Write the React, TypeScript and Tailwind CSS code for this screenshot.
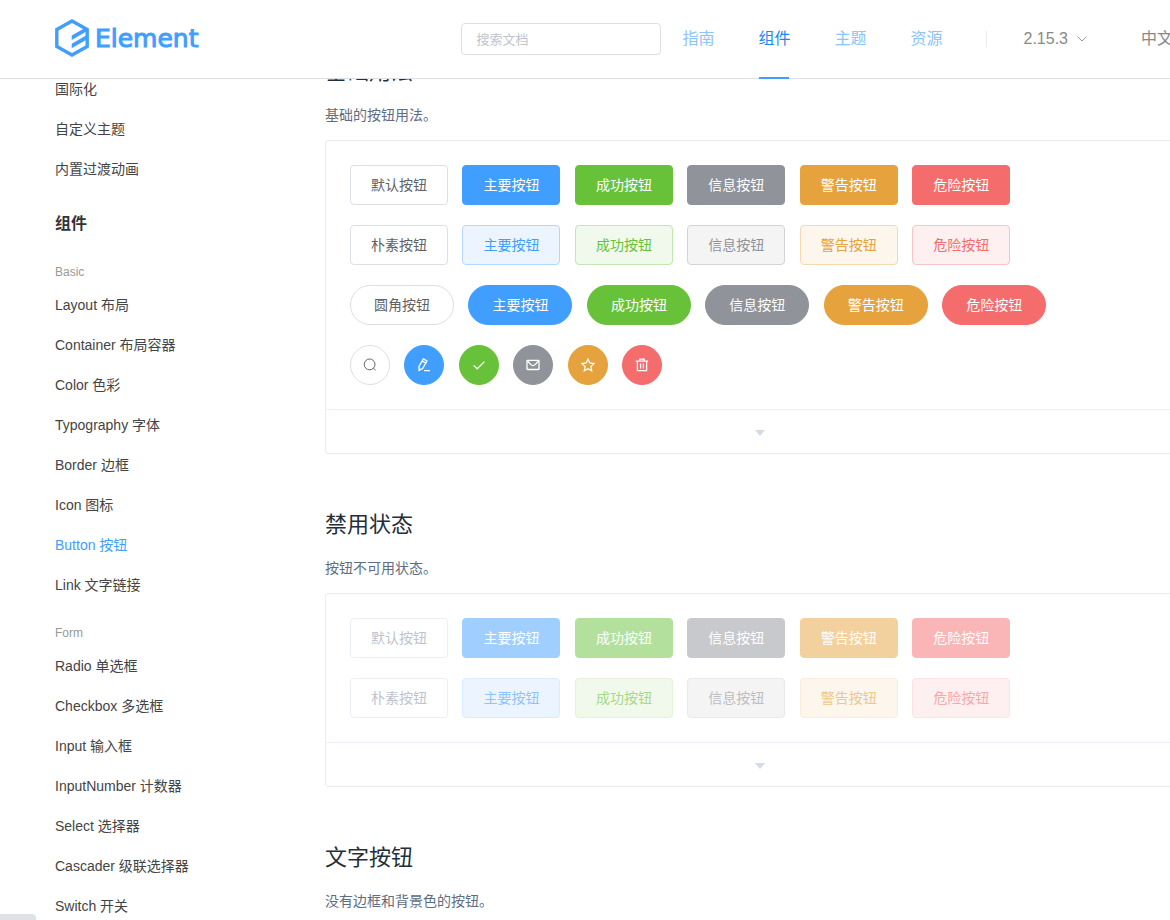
import React, { useState } from "react";

const navLinks = ["指南", "组件", "主题", "资源"];

const guides = ["国际化", "自定义主题", "内置过渡动画"];

const groups = [
  {
    name: "Basic",
    items: [
      "Layout 布局",
      "Container 布局容器",
      "Color 色彩",
      "Typography 字体",
      "Border 边框",
      "Icon 图标",
      "Button 按钮",
      "Link 文字链接",
    ],
  },
  {
    name: "Form",
    items: [
      "Radio 单选框",
      "Checkbox 多选框",
      "Input 输入框",
      "InputNumber 计数器",
      "Select 选择器",
      "Cascader 级联选择器",
      "Switch 开关",
    ],
  },
];

type Kind = "default" | "primary" | "success" | "info" | "warning" | "danger";

const kinds: Kind[] = ["default", "primary", "success", "info", "warning", "danger"];

const labels: Record<Kind, string> = {
  default: "默认按钮",
  primary: "主要按钮",
  success: "成功按钮",
  info: "信息按钮",
  warning: "警告按钮",
  danger: "危险按钮",
};

const solid: Record<Kind, string> = {
  default:
    "bg-white border-[#dcdfe6] text-[#606266] disabled:border-[#ebeef5] disabled:text-[#c0c4cc]",
  primary: "bg-[#409eff] border-[#409eff] text-white disabled:bg-[#a0cfff] disabled:border-[#a0cfff]",
  success: "bg-[#67c23a] border-[#67c23a] text-white disabled:bg-[#b3e19d] disabled:border-[#b3e19d]",
  info: "bg-[#909399] border-[#909399] text-white disabled:bg-[#c8c9cc] disabled:border-[#c8c9cc]",
  warning: "bg-[#e6a23c] border-[#e6a23c] text-white disabled:bg-[#f3d19e] disabled:border-[#f3d19e]",
  danger: "bg-[#f56c6c] border-[#f56c6c] text-white disabled:bg-[#fab6b6] disabled:border-[#fab6b6]",
};

const plain: Record<Kind, string> = {
  default:
    "bg-white border-[#dcdfe6] text-[#606266] disabled:border-[#ebeef5] disabled:text-[#c0c4cc]",
  primary: "bg-[#ecf5ff] border-[#b3d8ff] text-[#409eff] disabled:border-[#d9ecff] disabled:text-[#8cc5ff]",
  success: "bg-[#f0f9eb] border-[#c2e7b0] text-[#67c23a] disabled:border-[#e1f3d8] disabled:text-[#a4da89]",
  info: "bg-[#f4f4f5] border-[#d3d4d6] text-[#909399] disabled:border-[#e9e9eb] disabled:text-[#bcbec2]",
  warning: "bg-[#fdf6ec] border-[#f5dab1] text-[#e6a23c] disabled:border-[#faecd8] disabled:text-[#f0c78a]",
  danger: "bg-[#fef0f0] border-[#fbc4c4] text-[#f56c6c] disabled:border-[#fde2e2] disabled:text-[#f9a7a7]",
};

const icons: Record<Kind, { title: string; art: React.ReactNode }> = {
  default: {
    title: "搜索",
    art: (
      <>
        <circle cx="6.6" cy="6.4" r="5.4" strokeWidth="1" />
        <path d="M10.4 10.2 12.6 12.4" strokeWidth="1" />
      </>
    ),
  },
  primary: {
    title: "编辑",
    art: <path d="M6.4 0.9 10 3 5.6 10.6 2 12.4 2 8.5ZM5.2 3 8.8 5.1M2.2 10.8 3.6 11.6M7 12.6H13" />,
  },
  success: { title: "确认", art: <path d="M1.6 7.4 5.2 10.8 12.4 3.6" /> },
  info: {
    title: "邮件",
    art: (
      <>
        <rect x="1" y="2.3" width="12" height="9.2" rx="0.5" />
        <path d="M1.6 3 4.6 6.4Q7 8.8 9.4 6.4L12.4 3" />
      </>
    ),
  },
  warning: {
    title: "收藏",
    art: <path d="M7 1.2 8.8 5 13 5.6 9.9 8.5 10.7 12.7 7 10.7 3.3 12.7 4.1 8.5 1 5.6 5.2 5Z" />,
  },
  danger: {
    title: "删除",
    art: <path d="M0.8 3.2H13.2M4.8 3V1.1H9.2V3M2.4 3.4V12.6H11.6V3.4M5.6 5.6V10.4M8.4 5.6V10.4" />,
  },
};

function Row({ children }: { children: React.ReactNode }) {
  return <div className="h-10 whitespace-nowrap text-base">{children}</div>;
}

function ButtonRow({
  first = "默认按钮",
  styles = solid,
  shape = "rounded px-5",
  disabled = false,
}: {
  first?: string;
  styles?: Record<Kind, string>;
  shape?: string;
  disabled?: boolean;
}) {
  return (
    <Row>
      {kinds.map((kind) => (
        <React.Fragment key={kind}>
          <button
            type="button"
            disabled={disabled}
            className={`mr-2.5 inline-block h-10 border align-top text-sm ${shape} ${styles[kind]}`}
          >
            {kind === "default" ? first : labels[kind]}
          </button>{" "}
        </React.Fragment>
      ))}
    </Row>
  );
}

function IconRow() {
  return (
    <Row>
      {kinds.map((kind) => (
        <React.Fragment key={kind}>
          <button
            type="button"
            aria-label={icons[kind].title}
            className={`mr-2.5 inline-block size-10 rounded-full border align-top ${solid[kind]}`}
          >
            <svg viewBox="0 0 14 14" className="mx-auto size-3.5 fill-none stroke-current" strokeWidth="1.3">
              {icons[kind].art}
            </svg>
          </button>{" "}
        </React.Fragment>
      ))}
    </Row>
  );
}

function Demo({ title, text, children }: { title: string; text: string; children?: React.ReactNode }) {
  return (
    <section className="mb-[55px]">
      <h3 className="text-[22px] leading-8 text-[#1f2f3d]">{title}</h3>
      <p className="mt-4 mb-3.5 text-sm leading-[22px] text-[#5e6d82]">{text}</p>
      {children && (
        <div className="rounded-[3px] border border-[#ebebeb]">
          <div className="space-y-5 p-6">{children}</div>
          <button
            type="button"
            aria-label="显示代码"
            className="flex h-11 w-full items-center justify-center border-t border-[#eaeefb] pt-0.5"
          >
            <svg viewBox="0 0 10 6" className="h-1.5 w-2.5 fill-[#d3dce6]">
              <path d="M0 0H10L5 6Z" />
            </svg>
          </button>
        </div>
      )}
    </section>
  );
}

function Chevron() {
  return (
    <svg viewBox="0 0 10 6" className="h-1.5 w-2.5 fill-none stroke-[#999]" strokeWidth="1">
      <path d="M0.5 0.5 5 5 9.5 0.5" />
    </svg>
  );
}

function Logo() {
  return (
    <a href="#home" className="flex items-center gap-1.5 pb-0.5 text-[#409eff]">
      <svg viewBox="0 0 34 38" className="h-[38px] w-[34px]">
        <path d="M17 2 32.2 10.6V27.4L17 36 1.8 27.4V10.6Z" fill="none" stroke="currentColor" strokeWidth="3.4" />
        <path d="M16.7 16.6 31 8.4V12.8L16.7 21ZM16.7 24.8 31 16.6V21L16.7 29.2Z" fill="currentColor" />
      </svg>
      <span className="pt-0.5 font-['DejaVu_Sans',sans-serif] text-[25px] leading-8 [-webkit-text-stroke:1px_#409eff]">
        Element
      </span>
    </a>
  );
}

export default function App() {
  const [query, setQuery] = useState("");

  return (
    <div className="flex h-screen flex-col overflow-hidden bg-white font-['Liberation_Sans','Noto_Sans_CJK_SC',sans-serif]">
      {/* Header */}
      <header className="flex h-[79px] min-w-[1195px] shrink-0 items-stretch border-b border-[#dcdfe6] pr-[3px] pl-[55px]">
        <Logo />
        <div className="ml-auto flex items-center">
          <input
            type="text"
            aria-label="搜索文档"
            placeholder="搜索文档"
            value={query}
            onChange={(e) => setQuery(e.target.value)}
            className="mr-[21px] h-8 w-[200px] rounded border border-[#dcdfe6] px-3.5 text-[13px] text-[#606266] placeholder:text-[#c0c4cc]"
          />
          <nav className="flex gap-11 self-stretch">
            {navLinks.map((link) => (
              <a
                key={link}
                href="#nav"
                className={`relative flex items-center ${link === "组件" ? "text-[#1989fa]" : "text-[#8cc4fc]"}`}
              >
                {link}
                {link === "组件" && <span className="absolute inset-x-px -bottom-px h-0.5 bg-[#409eff]" />}
              </a>
            ))}
          </nav>
          <span className="mr-[37px] ml-[43px] h-4 w-px bg-[#ebebeb]" />
          <button type="button" className="mr-[54px] flex items-center gap-[9px] text-[#888]">
            2.15.3
            <Chevron />
          </button>
          <button type="button" className="flex items-center gap-[9px] text-[#888]">
            中文
            <Chevron />
          </button>
        </div>
      </header>

      <div className="flex min-h-0 min-w-[1195px] flex-1 overflow-hidden pl-[55px]">
        {/* Sidebar */}
        <aside className="-mt-2.5 w-[270px] shrink-0 text-sm text-[#444]">
          {guides.map((item) => (
            <a key={item} href="#guide" className="block leading-10">
              {item}
            </a>
          ))}
          <h2 className="mt-[15px] text-base leading-10 font-bold text-[#333]">组件</h2>
          {groups.map((group) => (
            <div key={group.name} className="mt-[15px]">
              <div className="text-xs leading-[26px] text-[#999]">{group.name}</div>
              {group.items.map((item) => (
                <a
                  key={item}
                  href="#component"
                  className={`block leading-10 ${item === "Button 按钮" ? "text-[#409eff]" : ""}`}
                >
                  {item}
                </a>
              ))}
            </div>
          ))}
        </aside>

        {/* Demos */}
        <main className="-mt-[23px] min-w-0 flex-1">
          <Demo title="基础用法" text="基础的按钮用法。">
            <ButtonRow />
            <ButtonRow first="朴素按钮" styles={plain} />
            <ButtonRow first="圆角按钮" shape="rounded-full px-[23px]" />
            <IconRow />
          </Demo>
          <Demo title="禁用状态" text="按钮不可用状态。">
            <ButtonRow disabled />
            <ButtonRow first="朴素按钮" styles={plain} disabled />
          </Demo>
          <Demo title="文字按钮" text="没有边框和背景色的按钮。" />
        </main>
      </div>

      <div className="fixed bottom-0 left-0 h-1.5 w-9 rounded-tr bg-[#dee1e6]" />
    </div>
  );
}
